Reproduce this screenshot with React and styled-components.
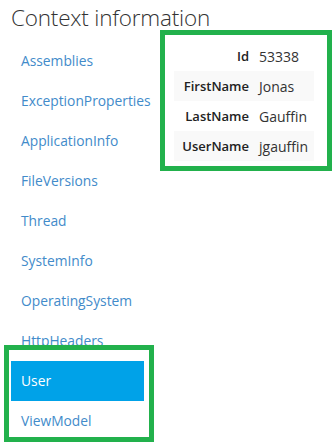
import React from 'react';
import styled, { createGlobalStyle } from 'styled-components';

const GlobalStyle = createGlobalStyle`
  body {
    margin: 0;
    background: #fff;
    font-family: "Open Sans", "Liberation Sans", sans-serif;
    color: #333;
  }
`;

const sections = [
  'Assemblies',
  'ExceptionProperties',
  'ApplicationInfo',
  'FileVersions',
  'Thread',
  'SystemInfo',
  'OperatingSystem',
  'HttpHeaders',
];

const props = [
  ['Id', '53338'],
  ['FirstName', 'Jonas'],
  ['LastName', 'Gauffin'],
  ['UserName', 'jgauffin'],
];

const App = () => {
  return (
    <Page>
      <GlobalStyle />
      <Title>Context information</Title>
      <Main>
        <Nav>
          {sections.map((name) => (
            <NavItem key={name}>{name}</NavItem>
          ))}
          <Marked>
            <NavItem active>User</NavItem>
            <NavItem>ViewModel</NavItem>
          </Marked>
        </Nav>
        <TableFrame>
          <PropTable>
            <tbody>
              {props.map(([key, value], i) => (
                <Row key={key} striped={i % 2 === 1}>
                  <KeyCell>{key}</KeyCell>
                  <ValueCell>{value}</ValueCell>
                </Row>
              ))}
            </tbody>
          </PropTable>
        </TableFrame>
      </Main>
    </Page>
  );
};

const Page = styled.div`
  padding: 0 0 0 11px;
  width: 332px;
  height: 447px;
  box-sizing: border-box;
  overflow: hidden;
`;

const Title = styled.h1`
  margin: 0;
  padding-top: 2px;
  font-size: 22.5px;
  line-height: 32px;
  font-weight: 300;
  color: #333;
  letter-spacing: -0.2px;
`;

const Main = styled.div`
  display: flex;
  align-items: flex-start;
`;

const Nav = styled.div`
  width: 133px;
  margin-top: 7px;
  display: flex;
  flex-direction: column;
`;

const NavItem = styled.div`
  height: 40px;
  line-height: 40px;
  padding-left: 10px;
  font-size: 13.8px;
  white-space: nowrap;
  color: ${(p) => (p.active ? '#fff' : '#428bca')};
  background: ${(p) => (p.active ? '#00a2e8' : 'transparent')};
`;

const Marked = styled.div`
  position: relative;

  &::after {
    content: '';
    position: absolute;
    top: -16px;
    left: -7px;
    right: -10px;
    bottom: -1px;
    border: 5px solid #22b14c;
    pointer-events: none;
  }
`;

const TableFrame = styled.div`
  margin-left: 16px;
  margin-top: -4px;
  width: 159px;
  height: 125px;
  border: 5px solid #22b14c;
  padding: 6px 0 0 9px;
  box-sizing: content-box;
  overflow: hidden;
`;

const PropTable = styled.table`
  border-collapse: collapse;
  width: 140px;
  font-size: 13px;
`;

const Row = styled.tr`
  height: 30px;
  background: ${(p) => (p.striped ? '#f9f9f9' : 'transparent')};
`;

const KeyCell = styled.td`
  width: 80px;
  box-sizing: border-box;
  padding: 0 5px 0 0;
  text-align: right;
  font-weight: 600;
  color: #222;
`;

const ValueCell = styled.td`
  padding: 0 0 0 5px;
  font-size: 14px;
  color: #333;
`;

export default App;
